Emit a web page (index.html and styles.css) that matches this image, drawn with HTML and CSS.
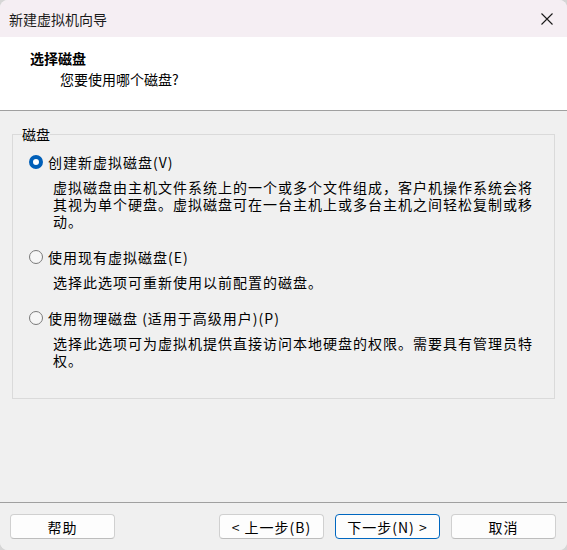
FILE: index.html
```html
<!DOCTYPE html>
<html lang="zh-CN">
<head>
<meta charset="utf-8">
<title>新建虚拟机向导</title>
<link rel="stylesheet" href="styles.css">
</head>
<body>
<div class="window">
  <div class="titlebar">
    <span class="title">新建虚拟机向导</span>
    <svg class="close" width="12" height="12" viewBox="0 0 12 12" aria-hidden="true">
      <path d="M0.5 0.5 L11.5 11.5 M11.5 0.5 L0.5 11.5" stroke="#1a1a1a" stroke-width="1.1" fill="none"/>
    </svg>
  </div>
  <div class="header">
    <div class="h-title">选择磁盘</div>
    <div class="h-sub">您要使用哪个磁盘?</div>
  </div>
  <main class="content">
    <fieldset class="group">
      <legend class="legend">磁盘</legend>
      <div class="option">
        <div class="opt-row"><span class="radio checked"></span><span class="opt-label">创建新虚拟磁盘(V)</span></div>
        <p class="desc">虚拟磁盘由主机文件系统上的一个或多个文件组成，客户机操作系统会将其视为单个硬盘。虚拟磁盘可在一台主机上或多台主机之间轻松复制或移动。</p>
      </div>
      <div class="option">
        <div class="opt-row"><span class="radio"></span><span class="opt-label">使用现有虚拟磁盘(E)</span></div>
        <p class="desc">选择此选项可重新使用以前配置的磁盘。</p>
      </div>
      <div class="option">
        <div class="opt-row"><span class="radio"></span><span class="opt-label">使用物理磁盘 (适用于高级用户)(P)</span></div>
        <p class="desc">选择此选项可为虚拟机提供直接访问本地硬盘的权限。需要具有管理员特权。</p>
      </div>
    </fieldset>
  </main>
  <footer class="footer">
    <button class="btn">帮助</button>
    <div class="nav">
      <button class="btn">&lt; 上一步(B)</button>
      <button class="btn btn-default">下一步(N) &gt;</button>
      <button class="btn">取消</button>
    </div>
  </footer>
</div>
</body>
</html>
```
FILE: styles.css
```css
html, body {
  margin: 0;
  padding: 0;
  background: #d6d6d6;
}
body {
  font-family: "Noto Sans CJK SC", "Noto Sans", sans-serif;
  color: #000;
}
.window {
  width: 567px;
  height: 550px;
  display: flex;
  flex-direction: column;
  overflow: hidden;
  border-radius: 8px;
  background: #f0f0f0;
}
.titlebar {
  height: 37px;
  flex: none;
  display: flex;
  align-items: center;
  justify-content: space-between;
  padding-left: 9px;
  background: #f5eef3;
}
.title {
  font-size: 14px;
  line-height: 18px;
  color: #1a1a1a;
}
.close {
  margin-right: 14px;
  margin-top: 1px;
}
.header {
  height: 73px;
  flex: none;
  box-sizing: content-box;
  background: #ffffff;
  border-bottom: 1px solid #a0a0a0;
  padding: 0;
}
.h-title {
  margin: 12px 0 0 30px;
  font-size: 14px;
  font-weight: 700;
  line-height: 18px;
}
.h-sub {
  margin: 3px 0 0 60px;
  font-size: 14px;
  line-height: 18px;
}
.content {
  flex: 1;
  padding: 14px 12px 0 12px;
  background: #f0f0f0;
}
.group {
  margin: 0;
  border: 1px solid #dadada;
  padding: 10px 15px 29px 9px;
}
.legend {
  padding: 0;
  font-size: 14px;
  line-height: 18px;
}
.option {
  margin-left: 7px;
}
.option + .option {
  margin-top: 18px;
}
.opt-row {
  display: flex;
  align-items: center;
  gap: 5px;
  height: 18px;
}
.opt-label {
  font-size: 14px;
  line-height: 18px;
  letter-spacing: 1px;
}
.radio {
  width: 14px;
  height: 14px;
  box-sizing: border-box;
  border-radius: 50%;
  border: 1px solid #7a7a7a;
  background: #f6f6f6;
  flex: none;
}
.radio.checked {
  border: 4px solid #005fb8;
  background: #ffffff;
}
.desc {
  margin: 8px 0 0 24px;
  max-width: 487px;
  font-size: 14px;
  line-height: 17px;
  letter-spacing: 1px;
}
.footer {
  flex: none;
  height: 47px;
  border-top: 1px solid #a0a0a0;
  display: flex;
  align-items: center;
  justify-content: space-between;
  padding: 0 11px 0 10px;
  background: #f0f0f0;
}
.nav {
  display: flex;
  gap: 11px;
}
.btn {
  width: 105px;
  height: 25px;
  padding: 0;
  font-family: "Noto Sans CJK SC", "Noto Sans", sans-serif;
  font-size: 14px;
  line-height: 18px;
  letter-spacing: 1px;
  color: #000;
  background: #fdfdfd;
  border: 1px solid #d0d0d0;
  border-bottom-color: #bdbdbd;
  border-radius: 4px;
}
.btn-default {
  border: 1px solid #0067c0;
}
```
